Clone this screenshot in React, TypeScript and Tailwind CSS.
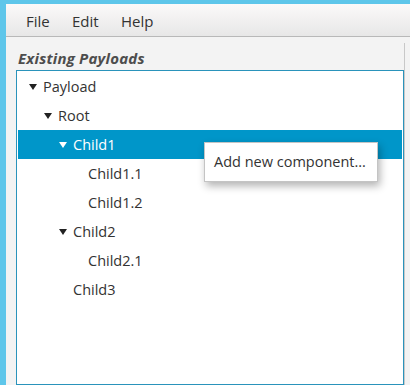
import React from "react";

type Node = { label: string; level: number; open?: boolean; selected?: boolean };

const nodes: Node[] = [
  { label: "Payload", level: 0, open: true },
  { label: "Root", level: 1, open: true },
  { label: "Child1", level: 2, open: true, selected: true },
  { label: "Child1.1", level: 3 },
  { label: "Child1.2", level: 3 },
  { label: "Child2", level: 2, open: true },
  { label: "Child2.1", level: 3 },
  { label: "Child3", level: 2 },
];

const indent = ["pl-[11px]", "pl-[26px]", "pl-[41px]", "pl-[56px]"];

function Arrow({ white }: { white?: boolean }) {
  return (
    <svg width="8" height="6" viewBox="0 0 8 6" className="block">
      <path d="M0 0 L8 0 L4 6 Z" fill={white ? "#ffffff" : "#222222"} />
    </svg>
  );
}

export default function App() {
  return (
    <div
      className="relative flex h-[385px] w-[410px] flex-col overflow-hidden bg-[#5ec6ea] pl-[6px] pt-[4px] text-[14.5px] text-[#333333]"
      style={{ fontFamily: '"Open Sans", "Noto Sans", sans-serif' }}
    >
      <div className="flex h-[33px] items-center border-b border-[#b8b8b8] bg-gradient-to-b from-[#fbf9f9] to-[#e7e7e7] pl-[20px] pt-[2px] text-[15px]">
        <span className="w-[46px]">File</span>
        <span className="w-[49px]">Edit</span>
        <span>Help</span>
      </div>

      <div className="flex flex-1 bg-[#f3f3f3]">
        <div className="flex flex-1 flex-col pl-[10px]">
          <div className="h-[33px] pl-[2px] pt-[11px] text-[15px] font-bold italic leading-[20px] tracking-[0.2px] text-[#4d4d4d]">
            Existing Payloads
          </div>
          <div className="flex-1 border border-[#2a93bb] bg-white p-px">
            {nodes.map((n) => (
              <div
                key={n.label}
                className={`flex h-[29px] items-center ${indent[n.level]} ${
                  n.selected ? "bg-[#0096c9] text-white" : ""
                }`}
              >
                <span className="flex w-[14px] items-center">{n.open && <Arrow white={n.selected} />}</span>
                <span>{n.label}</span>
              </div>
            ))}
          </div>
        </div>
        <div className="mt-[6px] w-px bg-[#c8c8c8]" />
        <div className="w-[5px]" />
      </div>

      <div className="absolute left-[204px] top-[142px] flex h-[40px] w-[174px] items-center border border-[#c4c4c4] bg-white pl-[9px] shadow-[2px_4px_8px_rgba(0,0,0,0.3)]">
        Add new component...
      </div>
    </div>
  );
}
